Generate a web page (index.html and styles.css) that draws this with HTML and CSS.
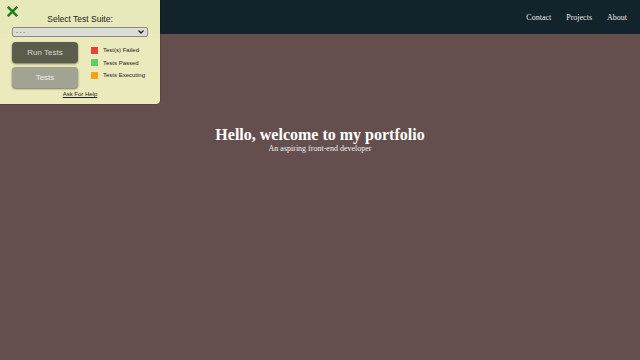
FILE: index.html
```html
<!DOCTYPE html>
<html>
<head>
<meta charset="utf-8">
<link rel="stylesheet" href="styles.css">
</head>
<body>
<header class="topbar">
  <nav class="nav">
    <a class="nav-link" href="#">Contact</a>
    <a class="nav-link" href="#">Projects</a>
    <a class="nav-link" href="#">About</a>
  </nav>
</header>
<main class="hero">
  <h1 class="hero-title">Hello, welcome to my portfolio</h1>
  <p class="hero-sub">An aspiring front-end developer</p>
</main>
<aside class="panel">
  <div class="panel-top">
    <svg class="close" viewBox="0 0 10 10" width="11" height="11">
      <path d="M1.5 1.5 L8.5 8.5 M8.5 1.5 L1.5 8.5" stroke="#1d7a1d" stroke-width="2.2" stroke-linecap="square" fill="none"/>
    </svg>
    <div class="panel-title">Select Test Suite:</div>
  </div>
  <div class="select"><span class="select-text">- - -</span>
    <svg class="caret" viewBox="0 0 6 4" width="6" height="4"><path d="M0.5 0.5 L3 3 L5.5 0.5" stroke="#222" stroke-width="1.3" fill="none"/></svg>
  </div>
  <div class="panel-body">
    <div class="buttons">
      <button class="btn btn-run">Run Tests</button>
      <button class="btn btn-tests">Tests</button>
    </div>
    <ul class="legend">
      <li class="legend-item"><span class="swatch swatch-red"></span>Test(s) Failed</li>
      <li class="legend-item"><span class="swatch swatch-green"></span>Tests Passed</li>
      <li class="legend-item"><span class="swatch swatch-orange"></span>Tests Executing</li>
    </ul>
  </div>
  <a class="help" href="#">Ask For Help</a>
</aside>
</body>
</html>
```

FILE: styles.css
```css
html, body {
  margin: 0;
  padding: 0;
  height: 100%;
}
body {
  background: #654f4e;
  font-family: "Liberation Serif", "Times New Roman", serif;
  position: relative;
}
.topbar {
  height: 34px;
  background: #13232b;
  display: flex;
  justify-content: flex-end;
  align-items: center;
}
.nav {
  display: flex;
  gap: 15px;
  padding-right: 13px;
  padding-top: 1px;
}
.nav-link {
  color: #e8e8e8;
  text-decoration: none;
  font-size: 8px;
  line-height: 1;
}
.hero {
  text-align: center;
  padding-top: 92px;
  color: #fff;
}
.hero-title {
  margin: 0;
  font-size: 16px;
  line-height: 18px;
  font-weight: bold;
}
.hero-sub {
  margin: 0;
  font-size: 8px;
  line-height: 10px;
  color: #f0f0f0;
}
.panel {
  position: absolute;
  left: 0;
  top: 0;
  width: 160px;
  height: 104px;
  box-sizing: border-box;
  background: rgba(240, 240, 192, 0.97);
  border-bottom-right-radius: 4px;
  box-shadow: 0 0 2px rgba(0, 0, 0, 0.45);
  font-family: "Liberation Sans", Arial, sans-serif;
  padding: 0 12px;
  display: flex;
  flex-direction: column;
}
.panel-top {
  position: relative;
  height: 27px;
}
.close {
  position: absolute;
  left: -5px;
  top: 6px;
}
.panel-title {
  text-align: center;
  font-size: 8.5px;
  line-height: 10px;
  padding-top: 14px;
  color: #222;
}
.select {
  height: 10px;
  box-sizing: border-box;
  background: #dcdcd6;
  border: 1px solid #8a8a80;
  border-radius: 2px;
  display: flex;
  align-items: center;
  justify-content: space-between;
  padding: 0 3px;
}
.select-text {
  font-size: 6px;
  color: #444;
  line-height: 1;
}
.panel-body {
  display: flex;
  margin-top: 5px;
}
.buttons {
  display: flex;
  flex-direction: column;
  gap: 4px;
  width: 66px;
}
.btn {
  height: 21px;
  border: none;
  border-radius: 4px;
  font-family: "Liberation Sans", Arial, sans-serif;
  font-size: 8px;
  padding: 0;
  box-shadow: 0 1px 2px rgba(0, 0, 0, 0.5);
}
.btn-run {
  background: #5c5c4c;
  color: #d8d8d8;
}
.btn-tests {
  background: #a3a394;
  color: #ececec;
}
.legend {
  list-style: none;
  margin: 0;
  padding: 4px 0 0 13px;
  display: flex;
  flex-direction: column;
  gap: 4.5px;
}
.legend-item {
  display: flex;
  align-items: center;
  font-size: 6px;
  line-height: 8px;
  color: #222;
}
.swatch {
  width: 7px;
  height: 7px;
  margin-right: 5px;
}
.swatch-red { background: #ea4335; }
.swatch-green { background: #5fd05f; }
.swatch-orange { background: #f7a01a; }
.help {
  align-self: center;
  margin-top: 3px;
  font-size: 6px;
  color: #222;
  text-decoration: underline;
}
```
